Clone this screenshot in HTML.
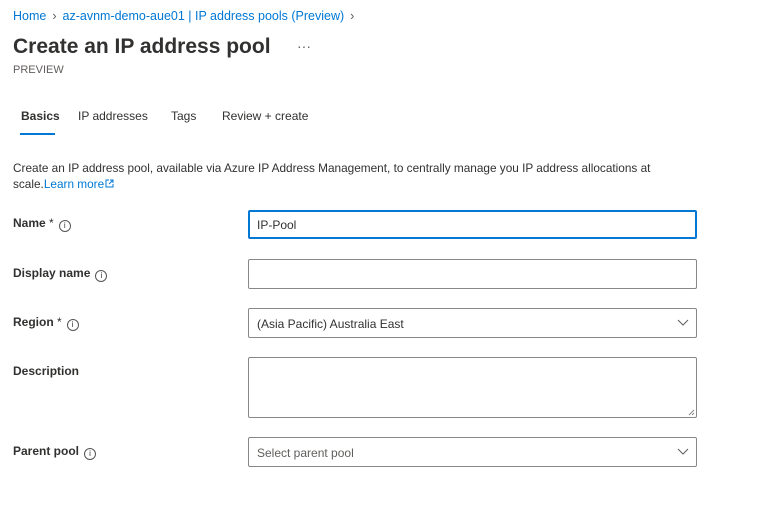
<!DOCTYPE html>
<html><head><meta charset="utf-8"><style>
body{margin:0;width:768px;height:511px;background:#fff;font-family:"Liberation Sans",sans-serif;color:#323130;position:relative;overflow:hidden}
.a{position:absolute;white-space:nowrap}
.bc{top:9px;left:13px;font-size:12.5px;color:#0078d4}
.bc .s{color:#605e5c;margin:0 6px}
h1{position:absolute;margin:0;top:35px;left:13px;font-size:21px;font-weight:600;color:#323130}
.lab{font-size:12px;font-weight:bold;left:13px}
.i{display:inline-block;width:10px;height:10px;border:1px solid #555;border-radius:50%;font-size:8px;line-height:10px;text-align:center;font-weight:normal;vertical-align:-1px;margin-left:5px}
.box{position:absolute;left:248px;width:449px;border:1px solid #8a8886;border-radius:2px;box-sizing:border-box;font-size:12px;padding-left:8px}
.chev{position:absolute;right:7px;top:10px}
</style></head><body>
<div class="a bc">Home<span class="s">›</span>az-avnm-demo-aue01 | IP address pools (Preview)<span class="s">›</span></div>
<h1>Create an IP address pool</h1>
<div class="a" style="left:297px;top:38px;font-size:14px;color:#605e5c">···</div>
<div class="a" style="left:13px;top:64px;font-size:11px;color:#605e5c">PREVIEW</div>
<div class="a" style="left:21px;top:109px;font-size:12px;font-weight:600">Basics</div>
<div class="a" style="left:20px;top:133px;width:35px;height:2px;background:#0078d4"></div>
<div class="a" style="left:78px;top:109px;font-size:12px">IP addresses</div>
<div class="a" style="left:171px;top:109px;font-size:12px">Tags</div>
<div class="a" style="left:222px;top:109px;font-size:12px">Review + create</div>
<div class="a" style="left:13px;top:160px;font-size:11.8px;line-height:16px">Create an IP address pool, available via Azure IP Address Management, to centrally manage you IP address allocations at<br>scale.<span style="color:#0078d4">Learn more<svg width="9" height="9" viewBox="0 0 9 9" style="margin-left:1px"><path d="M4 1H1v7h7V5M5 1h3v3M8 1L4 5" stroke="#0078d4" fill="none"/></svg></span></div>
<div class="a lab" style="top:216px">Name <span style="font-weight:normal">*</span><span class="i">i</span></div>
<div class="box" style="top:210px;height:29px;border:2px solid #0078d4;line-height:27px;padding-left:7px">IP-Pool</div>
<div class="a lab" style="top:266px">Display name<span class="i">i</span></div>
<div class="box" style="top:259px;height:30px"></div>
<div class="a lab" style="top:315px">Region <span style="font-weight:normal">*</span><span class="i">i</span></div>
<div class="box" style="top:308px;height:30px;line-height:30px">(Asia Pacific) Australia East<svg class="chev" width="12" height="8"><path d="M1 1l5 5 5-5" stroke="#605e5c" fill="none"/></svg></div>
<div class="a lab" style="top:364px">Description</div>
<div class="box" style="top:357px;height:61px"><svg style="position:absolute;right:1px;bottom:1px" width="7" height="7"><path d="M6 1L1 6M6 4L4 6" stroke="#888"/></svg></div>
<div class="a lab" style="top:444px">Parent pool<span class="i">i</span></div>
<div class="box" style="top:437px;height:30px;line-height:30px;color:#605e5c">Select parent pool<svg class="chev" width="12" height="8"><path d="M1 1l5 5 5-5" stroke="#605e5c" fill="none"/></svg></div>
</body></html>
